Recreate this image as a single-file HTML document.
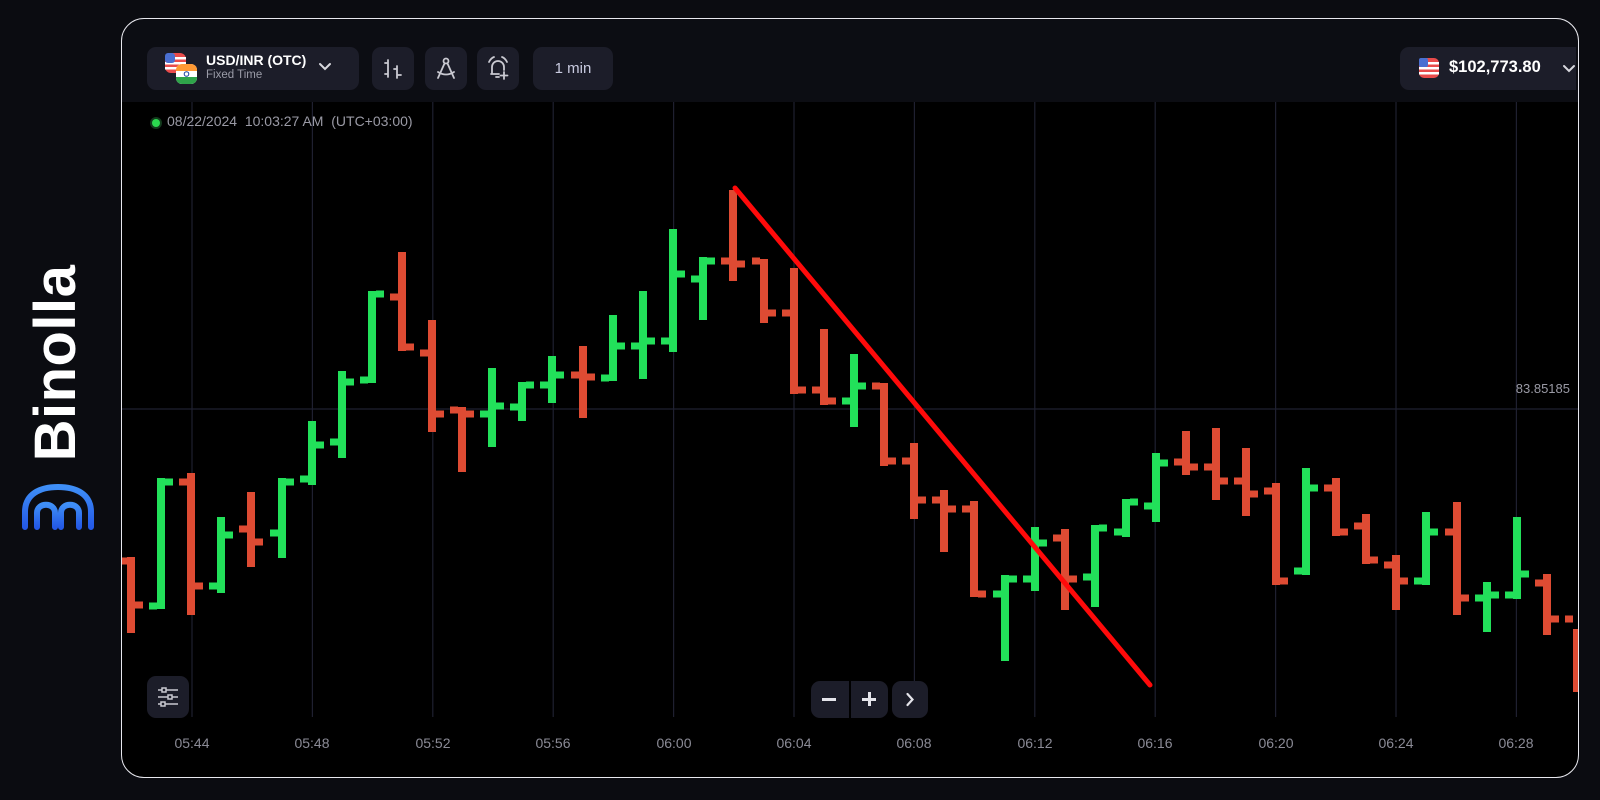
<!DOCTYPE html>
<html><head><meta charset="utf-8">
<style>
*{margin:0;padding:0;box-sizing:border-box}
body{width:1600px;height:800px;background:#0b0c11;position:relative;overflow:hidden;font-family:"Liberation Sans",sans-serif}
.abs{position:absolute}
.btn{position:absolute;background:#1c1d29;border-radius:9px}
.lbl{position:absolute;top:735px;width:60px;margin-left:-30px;text-align:center;color:#8b8b96;font-size:14px}
</style></head><body>

<!-- Logo -->
<div class="abs" style="left:56px;top:363px;transform:translate(-50%,-50%) rotate(-90deg);color:#fff;font-weight:bold;font-size:58px;line-height:1;white-space:nowrap;letter-spacing:0.5px">Binolla</div>
<svg class="abs" style="left:20px;top:482px" width="76" height="50" viewBox="0 0 76 50">
<defs><linearGradient id="lg" x1="0" y1="0" x2="0" y2="1"><stop offset="0" stop-color="#3f8ff7"/><stop offset="1" stop-color="#2459e6"/></linearGradient></defs>
<g fill="none" stroke="url(#lg)" stroke-width="6" stroke-linecap="round">
<path d="M5 45 V30 C5 12 20 5 38 5 C56 5 71 12 71 30 V45"/>
<path d="M17 45 V31 C17 20 35 20 35 31 V45"/>
<path d="M41 45 V31 C41 20 59 20 59 31 V45"/>
</g></svg>

<!-- Panel -->
<div class="abs" style="left:122px;top:19px;width:1456px;height:758px;border-radius:22px;background:#000;overflow:hidden">
  <div class="abs" style="left:0;top:0;width:1456px;height:83px;background:#0c0d13"></div>
</div>

<!-- Chart SVG -->
<svg class="abs" style="left:0;top:0" width="1600" height="800">
<defs><clipPath id="cp"><rect x="122" y="102" width="1456" height="675" rx="0"/></clipPath></defs>
<g clip-path="url(#cp)">
<g stroke="#1f2030" stroke-width="1.2">
<line x1="192" y1="102" x2="192" y2="717"/><line x1="312.4" y1="102" x2="312.4" y2="717"/><line x1="432.8" y1="102" x2="432.8" y2="717"/><line x1="553.2" y1="102" x2="553.2" y2="717"/><line x1="673.6" y1="102" x2="673.6" y2="717"/><line x1="794" y1="102" x2="794" y2="717"/><line x1="914.4" y1="102" x2="914.4" y2="717"/><line x1="1034.8" y1="102" x2="1034.8" y2="717"/><line x1="1155.2" y1="102" x2="1155.2" y2="717"/><line x1="1275.6" y1="102" x2="1275.6" y2="717"/><line x1="1396" y1="102" x2="1396" y2="717"/><line x1="1516.4" y1="102" x2="1516.4" y2="717"/>
<line x1="122" y1="409" x2="1578" y2="409"/>
</g>
<g fill="#de4b33">
<rect x="127" y="557" width="8" height="76"/><rect x="119" y="557.5" width="8" height="7"/><rect x="135" y="601.5" width="8" height="7"/>
<rect x="187" y="473" width="8" height="142"/><rect x="179" y="478.5" width="8" height="7"/><rect x="195" y="582.5" width="8" height="7"/>
<rect x="247" y="492" width="8" height="75"/><rect x="239" y="525.5" width="8" height="7"/><rect x="255" y="538.5" width="8" height="7"/>
<rect x="398" y="252" width="8" height="99"/><rect x="390" y="293.5" width="8" height="7"/><rect x="406" y="343.5" width="8" height="7"/>
<rect x="428" y="320" width="8" height="112"/><rect x="420" y="349.5" width="8" height="7"/><rect x="436" y="410.5" width="8" height="7"/>
<rect x="458" y="407" width="8" height="65"/><rect x="450" y="406.5" width="8" height="7"/><rect x="466" y="410.5" width="8" height="7"/>
<rect x="579" y="346" width="8" height="72"/><rect x="571" y="371.5" width="8" height="7"/><rect x="587" y="373.5" width="8" height="7"/>
<rect x="729" y="190" width="8" height="91"/><rect x="721" y="257.5" width="8" height="7"/><rect x="737" y="260.5" width="8" height="7"/>
<rect x="760" y="259" width="8" height="64"/><rect x="752" y="257.5" width="8" height="7"/><rect x="768" y="309.5" width="8" height="7"/>
<rect x="790" y="268" width="8" height="126"/><rect x="782" y="309.5" width="8" height="7"/><rect x="798" y="386.5" width="8" height="7"/>
<rect x="820" y="329" width="8" height="76"/><rect x="812" y="386.5" width="8" height="7"/><rect x="828" y="397.5" width="8" height="7"/>
<rect x="880" y="383" width="8" height="83"/><rect x="872" y="382.5" width="8" height="7"/><rect x="888" y="457.5" width="8" height="7"/>
<rect x="910" y="443" width="8" height="76"/><rect x="902" y="457.5" width="8" height="7"/><rect x="918" y="496.5" width="8" height="7"/>
<rect x="940" y="490" width="8" height="62"/><rect x="932" y="496.5" width="8" height="7"/><rect x="948" y="505.5" width="8" height="7"/>
<rect x="970" y="501" width="8" height="96"/><rect x="962" y="505.5" width="8" height="7"/><rect x="978" y="590.5" width="8" height="7"/>
<rect x="1061" y="529" width="8" height="81"/><rect x="1053" y="534.5" width="8" height="7"/><rect x="1069" y="575.5" width="8" height="7"/>
<rect x="1182" y="431" width="8" height="44"/><rect x="1174" y="458.5" width="8" height="7"/><rect x="1190" y="463.5" width="8" height="7"/>
<rect x="1212" y="428" width="8" height="72"/><rect x="1204" y="463.5" width="8" height="7"/><rect x="1220" y="477.5" width="8" height="7"/>
<rect x="1242" y="448" width="8" height="68"/><rect x="1234" y="477.5" width="8" height="7"/><rect x="1250" y="490.5" width="8" height="7"/>
<rect x="1272" y="483" width="8" height="102"/><rect x="1264" y="487.5" width="8" height="7"/><rect x="1280" y="577.5" width="8" height="7"/>
<rect x="1332" y="478" width="8" height="58"/><rect x="1324" y="484.5" width="8" height="7"/><rect x="1340" y="528.5" width="8" height="7"/>
<rect x="1362" y="514" width="8" height="50"/><rect x="1354" y="522.5" width="8" height="7"/><rect x="1370" y="556.5" width="8" height="7"/>
<rect x="1392" y="555" width="8" height="55"/><rect x="1384" y="561.5" width="8" height="7"/><rect x="1400" y="577.5" width="8" height="7"/>
<rect x="1453" y="502" width="8" height="113"/><rect x="1445" y="528.5" width="8" height="7"/><rect x="1461" y="594.5" width="8" height="7"/>
<rect x="1543" y="574" width="8" height="61"/><rect x="1535" y="579.5" width="8" height="7"/><rect x="1551" y="615.5" width="8" height="7"/>
<rect x="1573" y="629" width="8" height="63"/><rect x="1565" y="615.5" width="8" height="7"/>
</g>
<g fill="#22e05a">
<rect x="157" y="478" width="8" height="131"/><rect x="149" y="602.5" width="8" height="7"/><rect x="165" y="478.5" width="8" height="7"/>
<rect x="217" y="517" width="8" height="76"/><rect x="209" y="582.5" width="8" height="7"/><rect x="225" y="531.5" width="8" height="7"/>
<rect x="278" y="478" width="8" height="80"/><rect x="270" y="529.5" width="8" height="7"/><rect x="286" y="478.5" width="8" height="7"/>
<rect x="308" y="421" width="8" height="64"/><rect x="300" y="475.5" width="8" height="7"/><rect x="316" y="441.5" width="8" height="7"/>
<rect x="338" y="371" width="8" height="87"/><rect x="330" y="438.5" width="8" height="7"/><rect x="346" y="378.5" width="8" height="7"/>
<rect x="368" y="291" width="8" height="92"/><rect x="360" y="376.5" width="8" height="7"/><rect x="376" y="290.5" width="8" height="7"/>
<rect x="488" y="368" width="8" height="79"/><rect x="480" y="410.5" width="8" height="7"/><rect x="496" y="402.5" width="8" height="7"/>
<rect x="518" y="382" width="8" height="39"/><rect x="510" y="403.5" width="8" height="7"/><rect x="526" y="381.5" width="8" height="7"/>
<rect x="548" y="356" width="8" height="47"/><rect x="540" y="381.5" width="8" height="7"/><rect x="556" y="371.5" width="8" height="7"/>
<rect x="609" y="315" width="8" height="66"/><rect x="601" y="374.5" width="8" height="7"/><rect x="617" y="342.5" width="8" height="7"/>
<rect x="639" y="291" width="8" height="88"/><rect x="631" y="342.5" width="8" height="7"/><rect x="647" y="337.5" width="8" height="7"/>
<rect x="669" y="229" width="8" height="123"/><rect x="661" y="337.5" width="8" height="7"/><rect x="677" y="270.5" width="8" height="7"/>
<rect x="699" y="257" width="8" height="63"/><rect x="691" y="275.5" width="8" height="7"/><rect x="707" y="257.5" width="8" height="7"/>
<rect x="850" y="354" width="8" height="73"/><rect x="842" y="397.5" width="8" height="7"/><rect x="858" y="382.5" width="8" height="7"/>
<rect x="1001" y="575" width="8" height="86"/><rect x="993" y="590.5" width="8" height="7"/><rect x="1009" y="575.5" width="8" height="7"/>
<rect x="1031" y="527" width="8" height="64"/><rect x="1023" y="575.5" width="8" height="7"/><rect x="1039" y="539.5" width="8" height="7"/>
<rect x="1091" y="525" width="8" height="82"/><rect x="1083" y="573.5" width="8" height="7"/><rect x="1099" y="524.5" width="8" height="7"/>
<rect x="1122" y="499" width="8" height="38"/><rect x="1114" y="528.5" width="8" height="7"/><rect x="1130" y="498.5" width="8" height="7"/>
<rect x="1152" y="453" width="8" height="69"/><rect x="1144" y="502.5" width="8" height="7"/><rect x="1160" y="459.5" width="8" height="7"/>
<rect x="1302" y="468" width="8" height="107"/><rect x="1294" y="567.5" width="8" height="7"/><rect x="1310" y="484.5" width="8" height="7"/>
<rect x="1422" y="512" width="8" height="73"/><rect x="1414" y="577.5" width="8" height="7"/><rect x="1430" y="528.5" width="8" height="7"/>
<rect x="1483" y="582" width="8" height="50"/><rect x="1475" y="594.5" width="8" height="7"/><rect x="1491" y="591.5" width="8" height="7"/>
<rect x="1513" y="517" width="8" height="82"/><rect x="1505" y="591.5" width="8" height="7"/><rect x="1521" y="570.5" width="8" height="7"/>
</g>
<line x1="735" y1="188" x2="1150" y2="685" stroke="#ff0a0a" stroke-width="5" stroke-linecap="round"/>
</g>
</svg>

<!-- Header -->
<div class="btn" style="left:147px;top:47px;width:212px;height:43px"></div>
<svg class="abs" style="left:162px;top:50px" width="40" height="38">
<rect x="3" y="3" width="21" height="20" rx="6" fill="#e94b4b"/>
<g fill="#fff"><rect x="3" y="7" width="21" height="2.5"/><rect x="3" y="12" width="21" height="2.5"/><rect x="3" y="17" width="21" height="2.5"/></g>
<rect x="3" y="3" width="10" height="10" rx="3" fill="#4a6fd1"/>
<rect x="14" y="14" width="21" height="20" rx="6" fill="#fff"/>
<path d="M14 20 V20 a6 6 0 0 1 6-6 h9 a6 6 0 0 1 6 6 V21 H14z" fill="#ff9933"/>
<path d="M14 27 H35 V28 a6 6 0 0 1-6 6 h-9 a6 6 0 0 1-6-6z" fill="#2fa44a"/>
<circle cx="24.5" cy="24" r="2.3" fill="none" stroke="#1a3fa0" stroke-width="1"/>
</svg>
<div class="abs" style="left:206px;top:52px;color:#fff;font-weight:bold;font-size:14px">USD/INR (OTC)</div>
<div class="abs" style="left:206px;top:69px;color:#9b9ca8;font-size:11.5px">Fixed Time</div>
<svg class="abs" style="left:318px;top:62px" width="14" height="10"><path d="M2 2 L7 7 L12 2" fill="none" stroke="#d8d8de" stroke-width="2" stroke-linecap="round"/></svg>

<div class="btn" style="left:372px;top:47px;width:42px;height:43px"></div>
<svg class="abs" style="left:372px;top:47px" width="42" height="43"><g fill="none" stroke="#c9c9d1" stroke-width="1.8" stroke-linecap="round"><path d="M16 13 V30 M16 16 H13 M13 27 H16"/><path d="M25 19 V31 M25 22 H22 M25 28 H29"/></g></svg>
<div class="btn" style="left:425px;top:47px;width:42px;height:43px"></div>
<svg class="abs" style="left:425px;top:47px" width="42" height="43"><g fill="none" stroke="#c9c9d1" stroke-width="1.8" stroke-linecap="round"><circle cx="21" cy="14" r="2.5"/><path d="M19.5 16.5 L13 31 M22.5 16.5 L29 31 M13 25 Q21 30 29 25"/></g></svg>
<div class="btn" style="left:477px;top:47px;width:42px;height:43px"></div>
<svg class="abs" style="left:477px;top:47px" width="42" height="43"><g fill="none" stroke="#c9c9d1" stroke-width="1.8" stroke-linecap="round"><path d="M14 27 H22 M15 27 V20 a6 6 0 0 1 12 0 V23"/><path d="M12 15 Q14 11 17 10 M30 15 Q28 11 25 10"/><path d="M27 25 V32 M23.5 28.5 H30.5"/><path d="M19 30 H22"/></g></svg>
<div class="btn" style="left:533px;top:47px;width:80px;height:43px;color:#c9cbe0;font-size:15px;text-align:center;line-height:43px">1 min</div>

<div class="btn" style="left:1400px;top:47px;width:176px;height:43px;border-radius:9px 0 0 9px"></div>
<svg class="abs" style="left:1418px;top:57px" width="22" height="22">
<rect x="1" y="1" width="20" height="20" rx="5" fill="#e94b4b"/>
<g fill="#fff"><rect x="1" y="5" width="20" height="2.5"/><rect x="1" y="10" width="20" height="2.5"/><rect x="1" y="15" width="20" height="2.5"/></g>
<rect x="1" y="1" width="9" height="9" rx="2" fill="#4a6fd1"/></svg>
<div class="abs" style="left:1449px;top:58px;color:#fff;font-weight:bold;font-size:16.5px">$102,773.80</div>
<svg class="abs" style="left:1562px;top:64px" width="14" height="10"><path d="M2 2 L7 7 L12 2" fill="none" stroke="#d8d8de" stroke-width="2" stroke-linecap="round"/></svg>

<!-- panel border -->
<div class="abs" style="left:121px;top:18px;width:1458px;height:760px;border:1.5px solid #e8e8ee;border-radius:23px"></div>

<!-- date -->
<div class="abs" style="left:152px;top:119px;width:8px;height:8px;border-radius:50%;background:#2bd94f;box-shadow:0 0 0 2px #123a1c"></div>
<div class="abs" style="left:167px;top:113px;color:#9a9aa5;font-size:14px">08/22/2024&nbsp; 10:03:27 AM&nbsp; (UTC+03:00)</div>

<div class="abs" style="left:1480px;top:381px;width:90px;text-align:right;color:#9a9aa5;font-size:13px">83.85185</div>

<!-- filter button -->
<div class="btn" style="left:147px;top:676px;width:42px;height:42px"></div>
<svg class="abs" style="left:147px;top:676px" width="42" height="42"><g fill="none" stroke="#c9c9d1" stroke-width="1.5"><path d="M11 14 H31 M11 21 H31 M11 28 H31"/><rect x="15" y="12" width="4" height="4" fill="#1c1d29"/><rect x="21" y="19" width="4" height="4" fill="#1c1d29"/><rect x="14" y="26" width="4" height="4" fill="#1c1d29"/></g></svg>

<!-- zoom buttons -->
<div class="btn" style="left:811px;top:681px;width:77px;height:37px"></div>
<div class="abs" style="left:849px;top:681px;width:1.5px;height:37px;background:#000"></div>
<div class="abs" style="left:822px;top:698px;width:14px;height:2.5px;background:#e4e4ea"></div>
<div class="abs" style="left:862px;top:698px;width:14px;height:2.5px;background:#e4e4ea"></div>
<div class="abs" style="left:868px;top:692px;width:2.5px;height:14px;background:#e4e4ea"></div>
<div class="btn" style="left:892px;top:681px;width:36px;height:37px"></div>
<svg class="abs" style="left:892px;top:681px" width="36" height="37"><path d="M15.5 13 L20.5 18.5 L15.5 24" fill="none" stroke="#e4e4ea" stroke-width="2.2" stroke-linecap="round"/></svg>

<!-- time labels -->
<div class="lbl" style="left:192px">05:44</div><div class="lbl" style="left:312px">05:48</div><div class="lbl" style="left:433px">05:52</div><div class="lbl" style="left:553px">05:56</div><div class="lbl" style="left:674px">06:00</div><div class="lbl" style="left:794px">06:04</div><div class="lbl" style="left:914px">06:08</div><div class="lbl" style="left:1035px">06:12</div><div class="lbl" style="left:1155px">06:16</div><div class="lbl" style="left:1276px">06:20</div><div class="lbl" style="left:1396px">06:24</div><div class="lbl" style="left:1516px">06:28</div>
</body></html>
